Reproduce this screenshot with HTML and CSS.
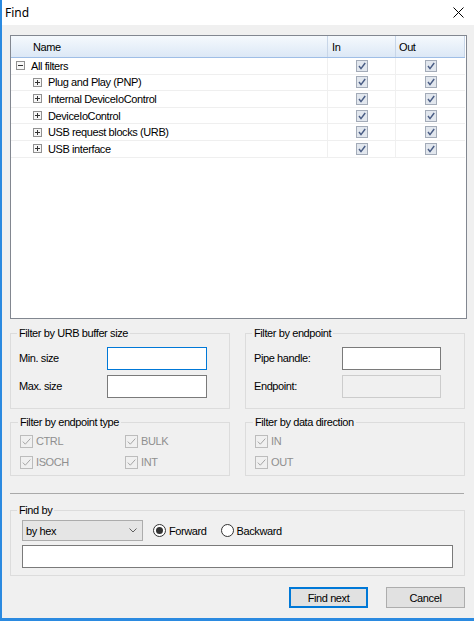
FILE: index.html
```html
<!DOCTYPE html>
<html>
<head>
<meta charset="utf-8">
<link rel="stylesheet" href="styles.css">
</head>
<body>
<div class="window">
  <div class="titlebar">
    <span class="title">Find</span>
    <svg class="close" viewBox="0 0 11 11"><path d="M0.5 0.5 L10.5 10.5 M10.5 0.5 L0.5 10.5" stroke="#000" stroke-width="1" fill="none"/></svg>
  </div>
  <div class="content">
    <div class="tree">
      <div class="thead">
        <div class="col c-name">Name</div>
        <div class="col c-in">In</div>
        <div class="col c-out">Out</div>
      </div>
      <div class="row">
        <div class="col c-name lvl0"><svg class="exp" viewBox="0 0 9 9"><rect x="0.5" y="0.5" width="8" height="8" fill="#f7f7f7" stroke="#919191"/><path d="M2 4.5 H7" stroke="#333"/></svg>All filters</div>
        <div class="col c-in"><svg class="tcb" viewBox="0 0 12 12"><rect x="0.5" y="0.5" width="11" height="11" fill="#e2e7ee" stroke="#a3abb8"/><path d="M3 6 L5 8.6 L9.2 3" stroke="#4a5d85" stroke-width="1.5" fill="none"/></svg></div>
        <div class="col c-out"><svg class="tcb" viewBox="0 0 12 12"><rect x="0.5" y="0.5" width="11" height="11" fill="#e2e7ee" stroke="#a3abb8"/><path d="M3 6 L5 8.6 L9.2 3" stroke="#4a5d85" stroke-width="1.5" fill="none"/></svg></div>
      </div>
      <div class="row">
        <div class="col c-name lvl1"><svg class="exp" viewBox="0 0 9 9"><rect x="0.5" y="0.5" width="8" height="8" fill="#f7f7f7" stroke="#919191"/><path d="M2 4.5 H7 M4.5 2 V7" stroke="#333"/></svg>Plug and Play (PNP)</div>
        <div class="col c-in"><svg class="tcb" viewBox="0 0 12 12"><rect x="0.5" y="0.5" width="11" height="11" fill="#e2e7ee" stroke="#a3abb8"/><path d="M3 6 L5 8.6 L9.2 3" stroke="#4a5d85" stroke-width="1.5" fill="none"/></svg></div>
        <div class="col c-out"><svg class="tcb" viewBox="0 0 12 12"><rect x="0.5" y="0.5" width="11" height="11" fill="#e2e7ee" stroke="#a3abb8"/><path d="M3 6 L5 8.6 L9.2 3" stroke="#4a5d85" stroke-width="1.5" fill="none"/></svg></div>
      </div>
      <div class="row">
        <div class="col c-name lvl1"><svg class="exp" viewBox="0 0 9 9"><rect x="0.5" y="0.5" width="8" height="8" fill="#f7f7f7" stroke="#919191"/><path d="M2 4.5 H7 M4.5 2 V7" stroke="#333"/></svg>Internal DeviceIoControl</div>
        <div class="col c-in"><svg class="tcb" viewBox="0 0 12 12"><rect x="0.5" y="0.5" width="11" height="11" fill="#e2e7ee" stroke="#a3abb8"/><path d="M3 6 L5 8.6 L9.2 3" stroke="#4a5d85" stroke-width="1.5" fill="none"/></svg></div>
        <div class="col c-out"><svg class="tcb" viewBox="0 0 12 12"><rect x="0.5" y="0.5" width="11" height="11" fill="#e2e7ee" stroke="#a3abb8"/><path d="M3 6 L5 8.6 L9.2 3" stroke="#4a5d85" stroke-width="1.5" fill="none"/></svg></div>
      </div>
      <div class="row">
        <div class="col c-name lvl1"><svg class="exp" viewBox="0 0 9 9"><rect x="0.5" y="0.5" width="8" height="8" fill="#f7f7f7" stroke="#919191"/><path d="M2 4.5 H7 M4.5 2 V7" stroke="#333"/></svg>DeviceIoControl</div>
        <div class="col c-in"><svg class="tcb" viewBox="0 0 12 12"><rect x="0.5" y="0.5" width="11" height="11" fill="#e2e7ee" stroke="#a3abb8"/><path d="M3 6 L5 8.6 L9.2 3" stroke="#4a5d85" stroke-width="1.5" fill="none"/></svg></div>
        <div class="col c-out"><svg class="tcb" viewBox="0 0 12 12"><rect x="0.5" y="0.5" width="11" height="11" fill="#e2e7ee" stroke="#a3abb8"/><path d="M3 6 L5 8.6 L9.2 3" stroke="#4a5d85" stroke-width="1.5" fill="none"/></svg></div>
      </div>
      <div class="row">
        <div class="col c-name lvl1"><svg class="exp" viewBox="0 0 9 9"><rect x="0.5" y="0.5" width="8" height="8" fill="#f7f7f7" stroke="#919191"/><path d="M2 4.5 H7 M4.5 2 V7" stroke="#333"/></svg>USB request blocks (URB)</div>
        <div class="col c-in"><svg class="tcb" viewBox="0 0 12 12"><rect x="0.5" y="0.5" width="11" height="11" fill="#e2e7ee" stroke="#a3abb8"/><path d="M3 6 L5 8.6 L9.2 3" stroke="#4a5d85" stroke-width="1.5" fill="none"/></svg></div>
        <div class="col c-out"><svg class="tcb" viewBox="0 0 12 12"><rect x="0.5" y="0.5" width="11" height="11" fill="#e2e7ee" stroke="#a3abb8"/><path d="M3 6 L5 8.6 L9.2 3" stroke="#4a5d85" stroke-width="1.5" fill="none"/></svg></div>
      </div>
      <div class="row">
        <div class="col c-name lvl1"><svg class="exp" viewBox="0 0 9 9"><rect x="0.5" y="0.5" width="8" height="8" fill="#f7f7f7" stroke="#919191"/><path d="M2 4.5 H7 M4.5 2 V7" stroke="#333"/></svg>USB interface</div>
        <div class="col c-in"><svg class="tcb" viewBox="0 0 12 12"><rect x="0.5" y="0.5" width="11" height="11" fill="#e2e7ee" stroke="#a3abb8"/><path d="M3 6 L5 8.6 L9.2 3" stroke="#4a5d85" stroke-width="1.5" fill="none"/></svg></div>
        <div class="col c-out"><svg class="tcb" viewBox="0 0 12 12"><rect x="0.5" y="0.5" width="11" height="11" fill="#e2e7ee" stroke="#a3abb8"/><path d="M3 6 L5 8.6 L9.2 3" stroke="#4a5d85" stroke-width="1.5" fill="none"/></svg></div>
      </div>
    </div>

    <div class="groups">
      <fieldset class="group fields">
        <legend>Filter by URB buffer size</legend>
        <div class="frow"><span class="flabel">Min. size</span><span class="input focus w100"></span></div>
        <div class="frow"><span class="flabel">Max. size</span><span class="input w100"></span></div>
      </fieldset>
      <fieldset class="group fields">
        <legend>Filter by endpoint</legend>
        <div class="frow"><span class="flabel">Pipe handle:</span><span class="input w99"></span></div>
        <div class="frow"><span class="flabel">Endpoint:</span><span class="input disabled w99"></span></div>
      </fieldset>
      <fieldset class="group checks">
        <legend>Filter by endpoint type</legend>
        <div class="cgrid">
          <span class="cb"><svg class="dcb" viewBox="0 0 13 13"><rect x="0.5" y="0.5" width="12" height="12" fill="none" stroke="#bcbcbc"/><path d="M2.8 6.6 L5.3 9.2 L10.3 3.6" stroke="#a6a6a6" stroke-width="1" fill="none"/></svg>CTRL</span>
          <span class="cb"><svg class="dcb" viewBox="0 0 13 13"><rect x="0.5" y="0.5" width="12" height="12" fill="none" stroke="#bcbcbc"/><path d="M2.8 6.6 L5.3 9.2 L10.3 3.6" stroke="#a6a6a6" stroke-width="1" fill="none"/></svg>BULK</span>
          <span class="cb"><svg class="dcb" viewBox="0 0 13 13"><rect x="0.5" y="0.5" width="12" height="12" fill="none" stroke="#bcbcbc"/><path d="M2.8 6.6 L5.3 9.2 L10.3 3.6" stroke="#a6a6a6" stroke-width="1" fill="none"/></svg>ISOCH</span>
          <span class="cb"><svg class="dcb" viewBox="0 0 13 13"><rect x="0.5" y="0.5" width="12" height="12" fill="none" stroke="#bcbcbc"/><path d="M2.8 6.6 L5.3 9.2 L10.3 3.6" stroke="#a6a6a6" stroke-width="1" fill="none"/></svg>INT</span>
        </div>
      </fieldset>
      <fieldset class="group checks">
        <legend>Filter by data direction</legend>
        <div class="cgrid one">
          <span class="cb"><svg class="dcb" viewBox="0 0 13 13"><rect x="0.5" y="0.5" width="12" height="12" fill="none" stroke="#bcbcbc"/><path d="M2.8 6.6 L5.3 9.2 L10.3 3.6" stroke="#a6a6a6" stroke-width="1" fill="none"/></svg>IN</span>
          <span class="cb"><svg class="dcb" viewBox="0 0 13 13"><rect x="0.5" y="0.5" width="12" height="12" fill="none" stroke="#bcbcbc"/><path d="M2.8 6.6 L5.3 9.2 L10.3 3.6" stroke="#a6a6a6" stroke-width="1" fill="none"/></svg>OUT</span>
        </div>
      </fieldset>
    </div>

    <div class="sep"></div>

    <fieldset class="findby">
      <legend>Find by</legend>
      <div class="fbrow">
        <div class="combo"><span>by hex</span><svg class="chev" viewBox="0 0 8 5"><path d="M0.5 0.5 L4 4 L7.5 0.5" stroke="#606060" fill="none"/></svg></div>
        <span class="radio"><svg class="rad" viewBox="0 0 13 13"><circle cx="6.5" cy="6.5" r="6" fill="#fff" stroke="#333"/><circle cx="6.5" cy="6.5" r="3.5" fill="#333"/></svg>Forward</span>
        <span class="radio"><svg class="rad" viewBox="0 0 13 13"><circle cx="6.5" cy="6.5" r="6" fill="#fff" stroke="#333"/></svg>Backward</span>
      </div>
      <span class="input wide"></span>
    </fieldset>

    <div class="buttons">
      <span class="btn default">Find next</span>
      <span class="btn">Cancel</span>
    </div>
  </div>
</div>
</body>
</html>
```
FILE: styles.css
```css
* { box-sizing: border-box; }
html, body { margin: 0; padding: 0; }
body {
  width: 474px;
  height: 621px;
  overflow: hidden;
  background: #f0f0f0;
  font-family: "Liberation Sans", Arial, sans-serif;
  font-size: 11px;
  letter-spacing: -0.4px;
  color: #000;
}
.window {
  height: 621px;
  border-left: 2px solid #2b8ae0;
  border-bottom: 3px solid #2b8ae0;
  background: #f0f0f0;
}
.titlebar {
  height: 25px;
  background: #fff;
  display: flex;
  align-items: center;
  justify-content: space-between;
  padding: 0 10px 0 3px;
}
.title {
  font-family: "Noto Sans", "Open Sans", sans-serif;
  font-size: 12px;
  letter-spacing: 0;
}
.close { width: 11px; height: 11px; display: block; }
.content { padding: 10px 0 0 8px; }

/* tree list */
.tree {
  width: 457px;
  height: 284px;
  border: 1px solid #828790;
  background: #fff;
}
.thead, .row { display: flex; width: 454px; }
.thead {
  height: 22px;
  background: linear-gradient(#f5f9fd, #dce8f6);
  border-bottom: 1px solid #9fbee6;
}
.row {
  height: 16.6px;
  border-bottom: 1px solid #efefef;
}
.col { display: flex; align-items: center; }
.c-name { width: 317px; }
.c-in { width: 68px; }
.c-out { width: 69px; }
.thead .col { border-right: 1px solid #c8d6e8; }
.thead .c-name { padding-left: 22px; }
.thead .c-in { padding-left: 4px; }
.thead .c-out { padding-left: 3px; }
.row .c-name { border-right: 1px solid #f0f0f0; }
.row .c-in { border-right: 1px solid #f0f0f0; justify-content: center; }
.row .c-out { justify-content: center; }
.lvl0 { padding-left: 5px; }
.lvl1 { padding-left: 22px; }
.exp { width: 9px; height: 9px; margin-right: 6px; flex: none; display: block; }
.tcb { width: 12px; height: 12px; display: block; }

/* groups */
.groups {
  display: grid;
  grid-template-columns: 220px 220px;
  column-gap: 15px;
  row-gap: 7px;
  width: 455px;
  margin-top: 8px;
}
fieldset {
  margin: 0;
  min-width: 0;
  border: 1px solid #dcdcdc;
}
legend {
  padding: 0 2px;
  margin-left: -2px;
  line-height: 13px;
}
.fields { padding: 7px 8px 10px 8px; display: flex; flex-direction: column; gap: 5px; }
.frow { display: flex; align-items: center; height: 23px; }
.flabel { width: 88px; flex: none; margin-top: -2px; }
.input {
  display: block;
  height: 23px;
  background: #fff;
  border: 1px solid #7a7a7a;
}
.input.focus { border-color: #0078d7; }
.input.disabled { background: #f0f0f0; border-color: #cccccc; }
.w100 { width: 100px; }
.w99 { width: 99px; }

.checks { padding: 2px 8px 3px 9px; }
.cgrid {
  display: grid;
  grid-template-columns: 105px auto;
  grid-auto-rows: 20px;
  row-gap: 1px;
}
.cgrid.one { grid-template-columns: auto; }
.cb { display: flex; align-items: center; gap: 3px; color: #8f8f8f; }
.dcb { width: 13px; height: 13px; display: block; flex: none; }

.sep {
  width: 454px;
  height: 1px;
  background: #a9a9a9;
  margin-top: 17px;
}

/* find by */
.findby {
  width: 455px;
  margin-top: 10px;
  padding: 3px 11px 7px 11px;
}
.findby legend { margin-left: -5px; }
.fbrow { display: flex; align-items: center; height: 21px; margin-bottom: 4px; }
.combo {
  width: 121px;
  height: 21px;
  background: #e5e5e5;
  border: 1px solid #acacac;
  display: flex;
  align-items: center;
  justify-content: space-between;
  padding: 0 5px 0 3px;
}
.chev { width: 8px; height: 5px; display: block; }
.radio { display: flex; align-items: center; gap: 3px; margin-left: 10px; }
.radio + .radio { margin-left: 14px; }
.rad { width: 13px; height: 13px; display: block; }
.input.wide { width: 431px; }

.buttons {
  width: 455px;
  display: flex;
  justify-content: flex-end;
  gap: 18px;
  margin-top: 11px;
}
.btn {
  width: 79px;
  height: 21px;
  background: #e1e1e1;
  border: 1px solid #adadad;
  display: flex;
  align-items: center;
  justify-content: center;
}
.btn.default {
  border-color: #0078d7;
  box-shadow: inset 0 0 0 1px #0078d7;
}
```
